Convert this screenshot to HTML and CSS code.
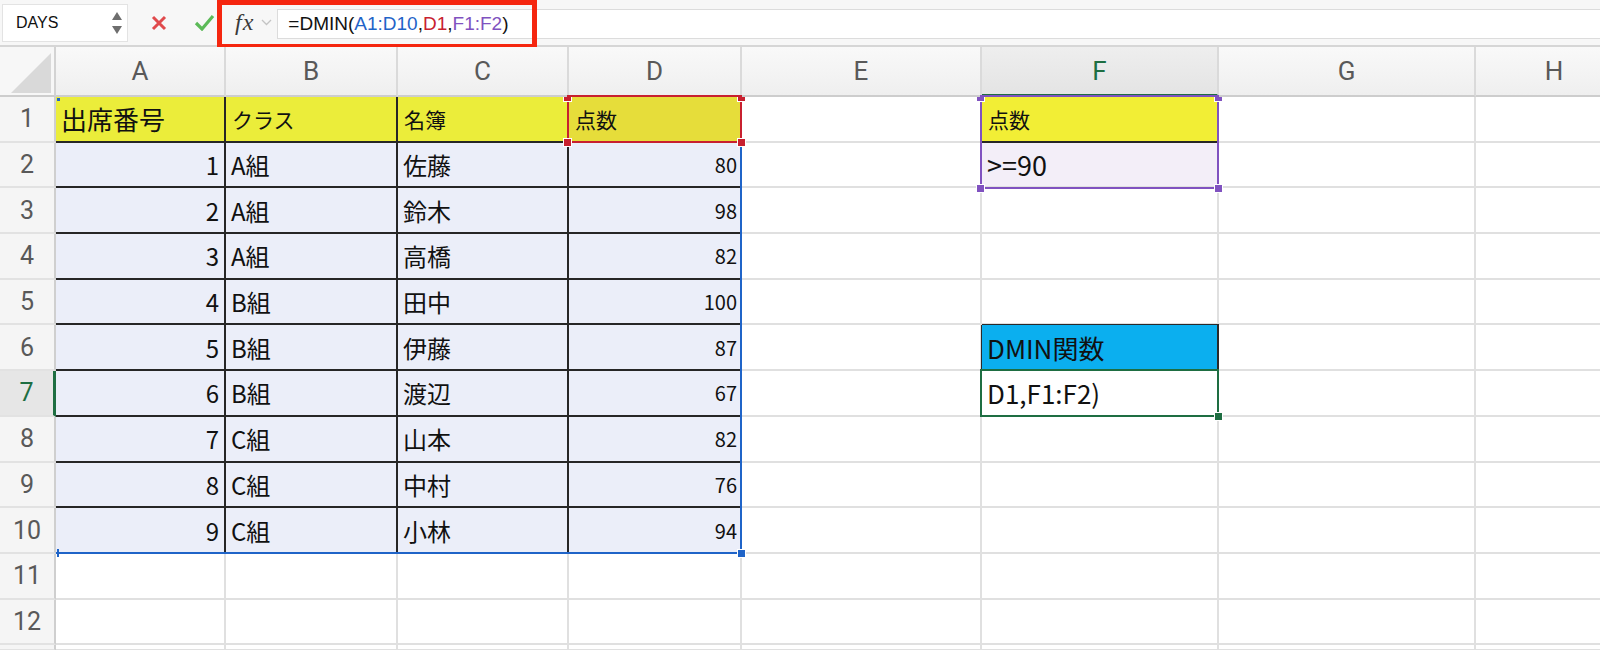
FILE: index.html
```html
<!DOCTYPE html>
<html lang="ja">
<head>
<meta charset="utf-8">
<title>DMIN</title>
<link rel="stylesheet" href="styles.css">
</head>
<body>
<div class="fbar">
  <div class="namebox">
    <span class="name">DAYS</span>
    <svg class="spin" width="12" height="24" viewBox="0 0 12 24"><polygon points="6,1 11,9 1,9" fill="#6e6e6e"/><polygon points="1,15 11,15 6,23" fill="#6e6e6e"/></svg>
  </div>
  <svg class="ico-x" width="16" height="16" viewBox="0 0 16 16"><path d="M2 2 L14 14 M14 2 L2 14" stroke="#e04a4c" stroke-width="3" stroke-linecap="butt"/></svg>
  <svg class="ico-ok" width="21" height="17" viewBox="0 0 21 17"><path d="M2 9 L8 15 L19 2" fill="none" stroke="#5cba58" stroke-width="3.2"/></svg>
  <span class="fx">fx</span>
  <svg class="chev" width="11" height="7" viewBox="0 0 11 7"><path d="M1 1 L5.5 5.5 L10 1" fill="none" stroke="#c4c4c4" stroke-width="1.3"/></svg>
  <div class="input">=DMIN(<span class="rb">A1:D10</span>,<span class="rr">D1</span>,<span class="rp">F1:F2</span>)</div>
  <div class="callout"></div>
</div>

<div class="sheet">
  <div class="c corner"><svg class="tri" width="40" height="40" viewBox="0 0 40 40"><polygon points="40,0 40,40 0,40" fill="#d9d9d9"/></svg></div>
  <div class="c ch">A</div><div class="c ch">B</div><div class="c ch">C</div><div class="c ch">D</div><div class="c ch">E</div><div class="c ch act">F</div><div class="c ch">G</div><div class="c ch">H</div>

  <div class="c rh">1</div><div class="c t y h1">出席番号</div><div class="c t y h2">クラス</div><div class="c t y h2">名簿</div><div class="c t y yd h2">点数</div><div class="c"></div><div class="c fy">点数</div><div class="c"></div><div class="c"></div>

  <div class="c rh">2</div><div class="c t n na">1</div><div class="c t">A組</div><div class="c t">佐藤</div><div class="c t n nd">80</div><div class="c"></div><div class="c fp">&gt;=90</div><div class="c"></div><div class="c"></div>

  <div class="c rh">3</div><div class="c t n na">2</div><div class="c t">A組</div><div class="c t">鈴木</div><div class="c t n nd">98</div><div class="c"></div><div class="c"></div><div class="c"></div><div class="c"></div>

  <div class="c rh">4</div><div class="c t n na">3</div><div class="c t">A組</div><div class="c t">高橋</div><div class="c t n nd">82</div><div class="c"></div><div class="c"></div><div class="c"></div><div class="c"></div>

  <div class="c rh">5</div><div class="c t n na">4</div><div class="c t">B組</div><div class="c t">田中</div><div class="c t n nd">100</div><div class="c"></div><div class="c"></div><div class="c"></div><div class="c"></div>

  <div class="c rh">6</div><div class="c t n na">5</div><div class="c t">B組</div><div class="c t">伊藤</div><div class="c t n nd">87</div><div class="c"></div><div class="c fc">DMIN関数</div><div class="c"></div><div class="c"></div>

  <div class="c rh act">7</div><div class="c t n na">6</div><div class="c t">B組</div><div class="c t">渡辺</div><div class="c t n nd">67</div><div class="c"></div><div class="c fa">D1,F1:F2)</div><div class="c"></div><div class="c"></div>

  <div class="c rh">8</div><div class="c t n na">7</div><div class="c t">C組</div><div class="c t">山本</div><div class="c t n nd">82</div><div class="c"></div><div class="c"></div><div class="c"></div><div class="c"></div>

  <div class="c rh">9</div><div class="c t n na">8</div><div class="c t">C組</div><div class="c t">中村</div><div class="c t n nd">76</div><div class="c"></div><div class="c"></div><div class="c"></div><div class="c"></div>

  <div class="c rh">10</div><div class="c t n na">9</div><div class="c t">C組</div><div class="c t">小林</div><div class="c t n nd">94</div><div class="c"></div><div class="c"></div><div class="c"></div><div class="c"></div>

  <div class="c rh">11</div><div class="c"></div><div class="c"></div><div class="c"></div><div class="c"></div><div class="c"></div><div class="c"></div><div class="c"></div><div class="c"></div>

  <div class="c rh">12</div><div class="c"></div><div class="c"></div><div class="c"></div><div class="c"></div><div class="c"></div><div class="c"></div><div class="c"></div><div class="c"></div>

  <div class="c rh"></div><div class="c"></div><div class="c"></div><div class="c"></div><div class="c"></div><div class="c"></div><div class="c"></div><div class="c"></div><div class="c"></div>

  <div class="ref ref-blue"><i class="tick tick-tl"></i><i class="tick tick-bl"></i><i class="hd hd-br"></i></div>
  <div class="ref ref-red"><i class="hd hd-tl top"></i><i class="hd hd-tr top"></i><i class="hd hd-bl"></i><i class="hd hd-br"></i></div>
  <div class="ref ref-purple"><i class="hd hd-tl top"></i><i class="hd hd-tr top"></i><i class="hd hd-bl"></i><i class="hd hd-br"></i></div>
  <div class="ref ref-active"><i class="hd hd-br"></i></div>
</div>
</body>
</html>
```

FILE: styles.css
```css
* { box-sizing: border-box; }
html, body { margin: 0; padding: 0; }
body {
  width: 1600px;
  height: 650px;
  overflow: hidden;
  background: #ffffff;
  font-family: "Liberation Sans", Arial, sans-serif;
}

/* ---------- formula bar ---------- */
.fbar {
  position: relative;
  display: flex;
  align-items: center;
  height: 47px;
  background: #f7f7f7;
  border-bottom: 2px solid #d6d6d6;
}
.namebox {
  display: flex;
  align-items: center;
  justify-content: space-between;
  width: 126px;
  height: 38px;
  margin-left: 2px;
  padding: 0 4px 0 13px;
  background: #ffffff;
  border: 1px solid #e3e3e3;
}
.name { font-size: 16px; color: #111; }
.spin { display: block; }
.ico-x { margin-left: 23px; flex: none; }
.ico-ok { margin-left: 27px; flex: none; }
.fx {
  margin-left: 20px;
  font-family: "Liberation Serif", "Times New Roman", serif;
  font-style: italic;
  font-size: 24px;
  color: #3a3a3a;
  letter-spacing: 1px;
}
.chev { margin-left: 7px; flex: none; }
.input {
  flex: 1;
  height: 30px;
  margin-left: 5px;
  margin-top: 2px;
  padding-left: 10px;
  background: #ffffff;
  border: 1px solid #dcdcdc;
  border-right: none;
  font-size: 19px;
  line-height: 28px;
  color: #111;
  white-space: nowrap;
}
.rb { color: #1f64c8; }
.rr { color: #c8202f; }
.rp { color: #8052c0; }
.callout {
  position: absolute;
  left: 217px;
  top: 0;
  width: 320px;
  height: 49px;
  border: 5px solid #f5260f;
  pointer-events: none;
}

/* ---------- sheet grid ---------- */
.sheet {
  position: relative;
  display: grid;
  grid-template-columns: 56px 170px 172px 171px 173px 240px 237px 257px 158px;
  grid-template-rows: 50px repeat(12, 45.7px) 6px;
}
.c {
  display: flex;
  align-items: center;
  padding: 0 5px;
  border-right: 2px solid #e0e0e0;
  border-bottom: 2px solid #e0e0e0;
  font-family: "Noto Sans CJK JP", "Noto Sans", sans-serif;
  font-size: 24px;
  color: #111;
  white-space: nowrap;
  overflow: hidden;
}
.corner {
  position: relative;
  padding: 0;
  align-items: flex-end;
  justify-content: flex-end;
  background: #f7f7f7;
  border-right: 2px solid #d3d3d3;
  border-bottom: 2px solid #cdcdcd;
}
.tri { display: block; margin: 0 3px 2px 0; }
.ch {
  justify-content: center;
  background: linear-gradient(#f9f9f9, #efefef);
  border-right: 2px solid #dadada;
  border-bottom: 2px solid #cdcdcd;
  font-family: Roboto, "Liberation Sans", sans-serif;
  font-size: 26px;
  color: #595959;
}
.ch.act {
  background: linear-gradient(#eeeeee, #e4e4e4);
  color: #1e6e42;
  border-bottom: 3px solid #1e6e42;
}
.rh {
  justify-content: center;
  padding: 0;
  background: #f5f5f5;
  border-right: 2px solid #cfcfcf;
  border-bottom: 2px solid #e2e2e2;
  font-family: Roboto, "Liberation Sans", sans-serif;
  font-size: 25px;
  color: #595959;
}
.rh.act {
  background: #e6e6e6;
  color: #1e6e42;
  border-right: 3px solid #1e6e42;
}

/* table A1:D10 */
.t {
  background: #ebeef9;
  border-right-color: #262626;
  border-bottom-color: #262626;
}
.t.y { background: #ebed3a; }
.t.yd { background: #e6dd3a; }
.h1 { font-size: 26px; }
.h2 { font-size: 21px; padding-left: 6px; }
.n { justify-content: flex-end; }
.na { padding-right: 5px; }
.nd { font-size: 20px; padding-right: 3px; }

/* F column */
.fy {
  background: #f2ee35;
  border-bottom-color: #262626;
  font-size: 21px;
  padding-left: 6px;
}
.fp { background: #f3eef8; font-size: 27px; }
.fc {
  background: #0bafef;
  border-right-color: #2a2a2a;
  border-bottom-color: #2a2a2a;
  box-shadow: 0 -1px 0 #2a2a2a, -1px 0 0 #2a2a2a;
  font-size: 26px;
}
.fa { font-size: 26px; }

/* ---------- reference highlights ---------- */
.ref { position: absolute; pointer-events: none; }
.ref-blue {
  left: 56px;
  top: 48px;
  width: 686px;
  height: 459px;
  border-right: 2px solid #1f64c8;
  border-bottom: 2px solid #1f64c8;
}
.ref-blue .hd { background: #1f64c8; }
.ref-red {
  left: 567px;
  top: 48px;
  width: 175px;
  height: 48px;
  border: 2px solid #c8202f;
}
.ref-red .hd { background: #c8202f; }
.ref-purple {
  left: 980px;
  top: 48px;
  width: 239px;
  height: 94px;
  border: 2px solid #8052c0;
}
.ref-purple .hd { background: #8052c0; }
.ref-active {
  left: 980px;
  top: 322px;
  width: 239px;
  height: 48px;
  border: 2px solid #1e6e42;
}
.ref-active .hd { background: #1e6e42; }

.hd {
  position: absolute;
  width: 9px;
  height: 9px;
  border: 1px solid #ffffff;
}
.hd-tl { left: -6px; top: -6px; }
.hd-tr { right: -6px; top: -6px; }
.hd-bl { left: -6px; bottom: -6px; }
.hd-br { right: -6px; bottom: -6px; }
.hd.top { top: 0; height: 5px; border-top: none; }
.tick { position: absolute; background: #1f64c8; }
.tick-tl { left: 1px; top: 3px; width: 3px; height: 3px; }
.tick-bl { left: 1px; bottom: -5px; width: 2px; height: 8px; }
```
